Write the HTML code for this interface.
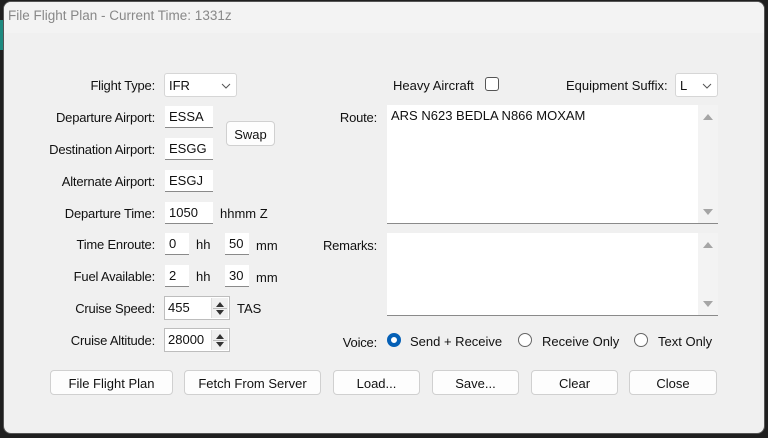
<!DOCTYPE html>
<html><head><style>
*{box-sizing:border-box;margin:0;padding:0}
body{width:768px;height:438px;background:#1f1f1f;position:relative;overflow:hidden;font-family:"Liberation Sans",sans-serif;font-size:13px;color:#111}
#win{position:absolute;left:3px;top:1px;width:762px;height:433px;background:#f0f0f0;border-radius:8px;border:1px solid #555;overflow:hidden}
#title{position:absolute;left:0;top:0;width:100%;height:31px;background:#f3f3f3;color:#888;font-size:13.5px;padding:6px 0 0 4px}
.a{position:absolute;white-space:nowrap}
.l{position:absolute;white-space:nowrap;text-align:right;width:160px;letter-spacing:-0.2px}
.tb{position:absolute;background:#fff;border-bottom:1px solid #8a8a8a;padding:3px 0 0 4px;font-size:13px}
.btn{position:absolute;background:#fdfdfd;border:1px solid #d0d0d0;border-radius:4px;text-align:center;padding-top:5px;height:25px;font-size:13px}
.dd{position:absolute;background:#fff;border:1px solid #d6d6d6;border-radius:3px;padding:4px 0 0 4px;font-size:13px}
.dd svg{position:absolute;right:5px;top:9px}
.ta{position:absolute;background:#fff;border-bottom:1px solid #8a8a8a;padding:3px 0 0 4px;font-size:13px}
.sb{position:absolute;right:0;top:0;width:20px;height:100%;background:#f3f3f3}
.radio{position:absolute;width:14px;height:14px;border-radius:50%;border:1px solid #666;background:#fff}
.spin{position:absolute;background:#fff;border:1px solid #bdbdbd;padding:3px 0 0 3px;font-size:13px}
.sp{position:absolute;right:1px;top:1px;width:17px;bottom:1px;background:#f0f0f0;border-left:1px solid #ddd}
</style></head><body>
<div style="position:absolute;left:0;top:20px;width:3px;height:30px;background:#1e8a80"></div>
<div id="win">
<div id="title">File Flight Plan - Current Time: 1331z</div>
</div>
<div style="position:absolute;left:0;top:0;width:768px;height:438px">
<div class="l" style="left:-5px;top:78px">Flight Type:</div>
<div class="dd" style="left:164px;top:73px;width:73px;height:24px">IFR<svg width="10" height="6"><path d="M1 1L5 5L9 1" stroke="#555" fill="none"/></svg></div>
<div class="l" style="left:-5px;top:110px">Departure Airport:</div>
<div class="tb" style="left:165px;top:106px;width:48px;height:22px">ESSA</div>
<div class="btn" style="left:226px;top:121px;width:49px">Swap</div>
<div class="l" style="left:-5px;top:142px">Destination Airport:</div>
<div class="tb" style="left:165px;top:138px;width:48px;height:22px">ESGG</div>
<div class="l" style="left:-5px;top:174px">Alternate Airport:</div>
<div class="tb" style="left:165px;top:170px;width:48px;height:22px">ESGJ</div>
<div class="l" style="left:-5px;top:206px">Departure Time:</div>
<div class="tb" style="left:165px;top:202px;width:48px;height:22px">1050</div>
<div class="a" style="left:220px;top:206px">hhmm Z</div>
<div class="l" style="left:-5px;top:237px">Time Enroute:</div>
<div class="tb" style="left:165px;top:233px;width:24px;height:22px">0</div>
<div class="a" style="left:196px;top:237px">hh</div>
<div class="tb" style="left:225px;top:233px;width:24px;height:22px">50</div>
<div class="a" style="left:256px;top:238px">mm</div>
<div class="l" style="left:-5px;top:269px">Fuel Available:</div>
<div class="tb" style="left:165px;top:265px;width:24px;height:22px">2</div>
<div class="a" style="left:196px;top:269px">hh</div>
<div class="tb" style="left:225px;top:265px;width:24px;height:22px">30</div>
<div class="a" style="left:256px;top:270px">mm</div>
<div class="l" style="left:-5px;top:301px">Cruise Speed:</div>
<div class="spin" style="left:164px;top:296px;width:66px;height:24px">455<div class="sp"><svg width="16" height="20"><path d="M4 9L8 4L12 9Z M4 12L8 17L12 12Z" fill="#333"/><path d="M1 10.5H15" stroke="#bbb"/></svg></div></div>
<div class="a" style="left:237px;top:301px">TAS</div>
<div class="l" style="left:-5px;top:333px">Cruise Altitude:</div>
<div class="spin" style="left:164px;top:328px;width:66px;height:24px">28000<div class="sp"><svg width="16" height="20"><path d="M4 9L8 4L12 9Z M4 12L8 17L12 12Z" fill="#333"/><path d="M1 10.5H15" stroke="#bbb"/></svg></div></div>

<div class="a" style="left:393px;top:78px">Heavy Aircraft</div>
<div class="a" style="left:485px;top:77px;width:14px;height:14px;border:1px solid #555;border-radius:3px;background:#fff"></div>
<div class="a" style="left:566px;top:78px">Equipment Suffix:</div>
<div class="dd" style="left:675px;top:73px;width:43px;height:24px">L<svg width="10" height="6"><path d="M1 1L5 5L9 1" stroke="#555" fill="none"/></svg></div>
<div class="l" style="left:217px;top:110px">Route:</div>
<div class="ta" style="left:387px;top:105px;width:331px;height:119px">ARS N623 BEDLA N866 MOXAM<div class="sb"><svg width="20" height="119"><path d="M5 15L10 9L15 15Z M5 104L10 110L15 104Z" fill="#a5a5a5"/></svg></div></div>
<div class="l" style="left:217px;top:238px">Remarks:</div>
<div class="ta" style="left:387px;top:233px;width:331px;height:83px"><div class="sb"><svg width="20" height="83"><path d="M5 15L10 9L15 15Z M5 68L10 74L15 68Z" fill="#a5a5a5"/></svg></div></div>
<div class="l" style="left:217px;top:335px">Voice:</div>
<div class="radio" style="left:387px;top:333px;border:4px solid #0560b6"></div>
<div class="a" style="left:410px;top:334px">Send + Receive</div>
<div class="radio" style="left:518px;top:333px"></div>
<div class="a" style="left:542px;top:334px">Receive Only</div>
<div class="radio" style="left:634px;top:333px"></div>
<div class="a" style="left:658px;top:334px">Text Only</div>

<div class="btn" style="left:50px;top:370px;width:123px">File Flight Plan</div>
<div class="btn" style="left:184px;top:370px;width:137px">Fetch From Server</div>
<div class="btn" style="left:333px;top:370px;width:87px">Load...</div>
<div class="btn" style="left:432px;top:370px;width:87px">Save...</div>
<div class="btn" style="left:531px;top:370px;width:87px">Clear</div>
<div class="btn" style="left:629px;top:370px;width:88px">Close</div>
</div>
</body></html>
